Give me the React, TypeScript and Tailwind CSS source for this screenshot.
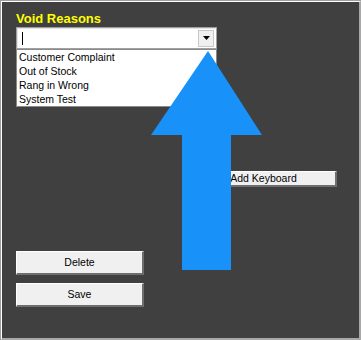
import React from "react";

const font = { fontFamily: '"Liberation Sans", Arial, sans-serif' };

function Btn({ label, className }: { label: string; className: string }) {
  return (
    <div
      className={
        "flex items-center justify-center bg-[#f0f0f0] border-t border-l border-t-white border-l-white border-r-2 border-b-2 border-r-[#6e6e6e] border-b-[#6e6e6e] text-[10.5px] text-black " +
        className
      }
    >
      {label}
    </div>
  );
}

export default function App() {
  const items = ["Customer Complaint", "Out of Stock", "Rang in Wrong", "System Test"];
  return (
    <div className="relative w-[361px] h-[340px] overflow-hidden" style={font}>
      <div className="w-full h-full border-t border-l border-[#a0a0a0]">
        <div className="w-full h-full bg-[#404040] border-t border-l border-t-white border-l-white border-r-2 border-b-2 border-r-[#a8a8a8] border-b-[#a8a8a8] pl-[14px] pt-[9px] flex flex-col">
          <div className="text-[13px] leading-[16px] font-bold text-[#ffff00] h-[16px]">Void Reasons</div>
          <div className="w-[201px] h-[22px] border border-[#a0a0a0] bg-white flex items-center">
            <div className="flex-1 h-full border border-t-[#e3e3e3] border-l-[#e3e3e3] border-r-white border-b-white flex items-center pl-[4px]">
              <div className="w-px h-[13px] bg-black" />
              <div className="flex-1" />
              <div className="w-[16px] h-[17px] mr-[1px] bg-[#f0f0f0] border border-[#c8c8c8] flex items-center justify-center">
                <svg width="7" height="4" viewBox="0 0 7 4">
                  <polygon points="0,0 7,0 3.5,4" fill="#000" />
                </svg>
              </div>
            </div>
          </div>
          <div className="w-[201px] h-[58px] bg-white border border-[#8a8a8a] flex flex-col text-[10.5px] leading-[14px] text-black pl-[2px]">
            {items.map((t) => (
              <div key={t} className="h-[14px]">
                {t}
              </div>
            ))}
          </div>
          <div className="mt-[64px] ml-[175px]">
            <Btn label="Add Keyboard" className="w-[146px] h-[16px]" />
          </div>
          <div className="mt-[64px] flex flex-col gap-[8px]">
            <Btn label="Delete" className="w-[128px] h-[24px]" />
            <Btn label="Save" className="w-[128px] h-[24px]" />
          </div>
        </div>
      </div>
      <svg className="absolute left-0 top-0" width="361" height="340" viewBox="0 0 361 340">
        <polygon
          points="208,51 262,135 231,135 231,270 182,270 182,135 151,135"
          fill="#1891f8"
        />
      </svg>
    </div>
  );
}
